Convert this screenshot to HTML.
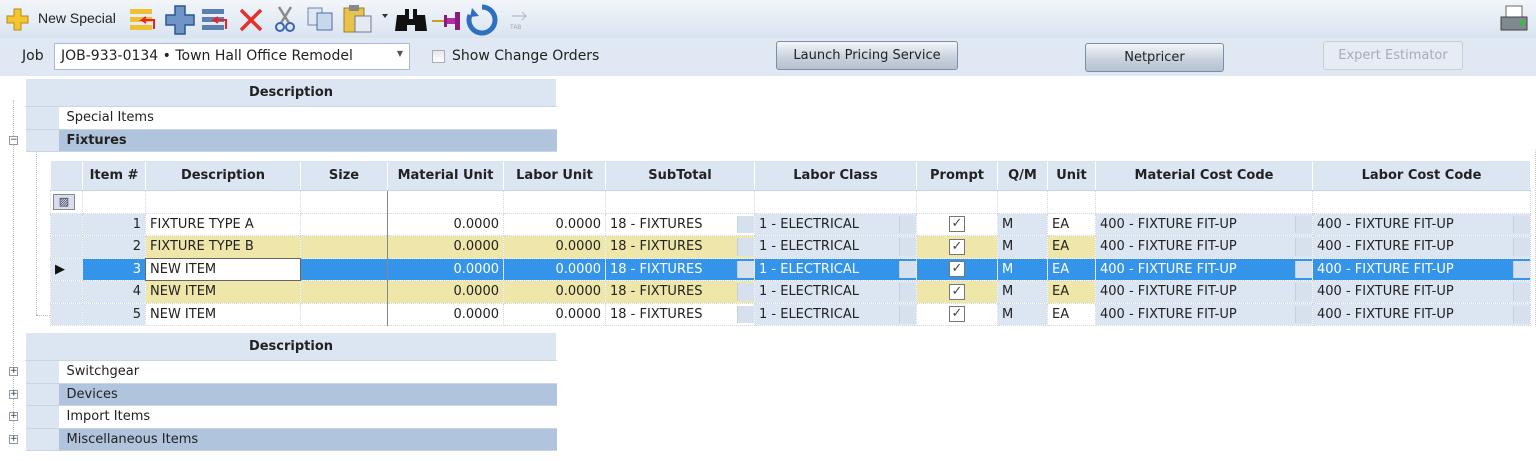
<!DOCTYPE html>
<html><head><meta charset="utf-8"><style>
*{box-sizing:border-box;margin:0;padding:0}
body{width:1536px;height:461px;background:#fff;font-family:"DejaVu Sans","Liberation Sans",sans-serif;font-size:13px;color:#222;position:relative;overflow:hidden}
.a{position:absolute}
.tb{left:0;top:0;width:1536px;height:38px;background:linear-gradient(#f3f6fa,#d9e4f1)}
.jr{left:0;top:38px;width:1536px;height:38px;background:#dfe8f3}
.btn{position:absolute;height:29px;border:1px solid #7a8ea8;border-radius:3px;background:linear-gradient(#f4f6f9,#c9d3df 55%,#b5c1cf);text-align:center;line-height:27px;font-size:13px;color:#222}
table{border-collapse:collapse;table-layout:fixed;position:absolute}
td{height:22.5px;padding:0 4px;white-space:nowrap;overflow:hidden;border:1px dotted #d2d8e0}
.h td{background:#dce6f2;font-weight:bold;text-align:center;height:30px;border:1px solid #fff;border-bottom:1px solid #c9d5e3}
.lb{background:#dce6f2}
.y{background:#efe6a9}
.s td{background:#3494ea;color:#fff}
.r{text-align:right}
.c{text-align:center}
.chk{display:inline-block;width:16px;height:16px;border:1px solid #777;background:#fff;font-size:13px;line-height:14px;color:#444;text-align:center;vertical-align:middle}
.dd{position:relative}
.dd:after{content:"";position:absolute;right:0;top:2px;bottom:2px;width:16px;background:#d7e1ee;border-left:1px solid #c5d0de}
.dt td{height:22.5px;border:none;border-bottom:1px solid #c9d5e3}
.pl{position:absolute;left:9px;width:9px;height:9px;border:1px solid #8a9ab0;background:#fff;font-size:9px;line-height:7px;text-align:center;color:#333}
</style></head><body>
<div class="a tb"></div>
<div class="a jr"></div>
<svg class="a" style="left:6px;top:8px" width="24" height="24"><path d="M8 1h7v7h7v7h-7v7H8v-7H1V8h7z" fill="#f3c630" stroke="#b58a10"/></svg>
<div class="a" style="left:38px;top:10px;font-family:'Liberation Sans',sans-serif;font-size:14px">New Special</div>
<svg class="a" style="left:128px;top:7px" width="30" height="26"><rect x="2" y="2" width="22" height="5" fill="#f0c030"/><rect x="2" y="10" width="22" height="5" fill="#f0c030"/><rect x="2" y="18" width="22" height="5" fill="#f0c030"/><path d="M26 22v-9h-12l4-3m-4 3l4 3" stroke="#e22" stroke-width="2" fill="none"/></svg>
<svg class="a" style="left:164px;top:4px" width="32" height="32"><path d="M11 2h10v9h9v10h-9v9H11v-9H2V11h9z" fill="#6f95c8" stroke="#2d5690" stroke-width="1.5"/></svg>
<svg class="a" style="left:200px;top:7px" width="30" height="26"><rect x="2" y="2" width="22" height="5" fill="#5a7fb0"/><rect x="2" y="10" width="22" height="5" fill="#5a7fb0"/><rect x="2" y="18" width="22" height="5" fill="#5a7fb0"/><path d="M26 22v-9h-12l4-3m-4 3l4 3" stroke="#e22" stroke-width="2" fill="none"/></svg>
<svg class="a" style="left:238px;top:7px" width="26" height="26"><path d="M3 3l20 20M23 3L3 23" stroke="#e8302a" stroke-width="3.5"/></svg>
<svg class="a" style="left:274px;top:5px" width="22" height="28"><path d="M5 2l10 16M17 2L7 18" stroke="#8a8a8a" stroke-width="2.5"/><circle cx="6" cy="22" r="4" fill="none" stroke="#3a66b0" stroke-width="2"/><circle cx="16" cy="22" r="4" fill="none" stroke="#3a66b0" stroke-width="2"/></svg>
<svg class="a" style="left:306px;top:6px" width="30" height="26"><rect x="2" y="2" width="14" height="17" fill="#dfe7f3" stroke="#6b86b0"/><rect x="11" y="7" width="15" height="17" fill="#c9d7eb" stroke="#4c6fa5"/></svg>
<svg class="a" style="left:342px;top:4px" width="36" height="30"><rect x="2" y="4" width="20" height="24" fill="#e8c24a" stroke="#a07d20"/><rect x="7" y="1" width="10" height="6" fill="#888"/><rect x="13" y="12" width="16" height="16" fill="#e6eaf0" stroke="#6b7a90"/></svg>
<div class="a" style="left:382px;top:14px;width:0;height:0;border:3px solid transparent;border-top:4px solid #333"></div>
<svg class="a" style="left:394px;top:5px" width="34" height="28"><path d="M3 10h10v16H1z M21 10h10l2 16H21z M11 4h4v10h-4zM19 4h4v10h-4zM12 14h10v6H12z" fill="#111"/></svg>
<svg class="a" style="left:430px;top:9px" width="34" height="22"><path d="M2 12h16" stroke="#c8a020" stroke-width="2"/><rect x="16" y="9" width="10" height="6" fill="#b030a0"/><rect x="25" y="3" width="5" height="18" fill="#8a1a80"/><rect x="14" y="6" width="3" height="12" fill="#8a1a80"/></svg>
<svg class="a" style="left:466px;top:4px" width="32" height="32"><path d="M16 3a13 13 0 1 1-12 8" stroke="#2d6fc0" stroke-width="5" fill="none"/><path d="M6 4l-2 9 9-1z" fill="#2d6fc0"/></svg>
<svg class="a" style="left:506px;top:6px" width="26" height="26"><path d="M6 10h14m-4-4l4 4-4 4" stroke="#b8bcc4" stroke-width="1.2" fill="none"/><text x="4" y="23" font-size="6" fill="#aaa">TAB</text></svg>
<svg class="a" style="left:1498px;top:4px" width="32" height="30"><rect x="8" y="2" width="16" height="12" fill="#fff" stroke="#666"/><path d="M3 13h26v13H3z" fill="#808890" stroke="#444"/><rect x="22" y="17" width="4" height="4" fill="#2c2"/></svg>

<div class="a" style="left:22px;top:48px;font-size:14px">Job</div>
<div class="a" style="left:54px;top:43px;width:356px;height:27px;background:#fff;border:1px solid #a7bcd8;padding:4px 6px;font-size:14px">JOB-933-0134 • Town Hall Office Remodel<span style="position:absolute;right:6px;top:5px;font-size:8px;color:#555">▼</span></div>
<div class="a" style="left:432px;top:50px;width:13px;height:13px;border:1px solid #aab;background:linear-gradient(#e8e8e8,#fff)"></div>
<div class="a" style="left:452px;top:48px;font-size:14px">Show Change Orders</div>
<div class="btn" style="left:776px;top:41px;width:182px">Launch Pricing Service</div>
<div class="btn" style="left:1085px;top:43px;width:139px">Netpricer</div>
<div class="btn" style="left:1323px;top:41px;width:140px;color:#aab;border-color:#c5ced9;background:#e6ecf4">Expert Estimator</div>

<div class="a" style="left:13px;top:100px;height:344px;border-left:1px dotted #bbb"></div>
<div class="a" style="left:36px;top:150px;height:165px;border-left:1px dotted #bbb"></div>
<div class="a" style="left:36px;top:315px;width:14px;border-top:1px dotted #bbb"></div>
<div class="a" style="left:1535px;top:150px;height:175px;border-left:1px dotted #ccc"></div>

<table style="left:25px;top:78px;width:532px">
<colgroup><col style="width:33px"><col></colgroup>
<tr class="h"><td colspan="2" style="height:28px">Description</td></tr>
<tr class="dt"><td class="lb"></td><td style="padding-left:8px">Special Items</td></tr>
<tr class="dt"><td class="lb"></td><td style="background:#b1c4dd;font-weight:bold;padding-left:8px">Fixtures</td></tr>
</table>
<div class="pl" style="top:136px">−</div>

<table style="left:50px;top:160px;width:1480px">
<colgroup><col style="width:32px"><col style="width:63px"><col style="width:155px"><col style="width:87px"><col style="width:116px"><col style="width:102px"><col style="width:149px"><col style="width:162px"><col style="width:81px"><col style="width:50px"><col style="width:48px"><col style="width:217px"><col style="width:218px"></colgroup>
<tr class="h"><td></td><td>Item #</td><td>Description</td><td>Size</td><td>Material Unit</td><td>Labor Unit</td><td>SubTotal</td><td>Labor Class</td><td>Prompt</td><td>Q/M</td><td>Unit</td><td>Material Cost Code</td><td>Labor Cost Code</td></tr>
<tr><td style="padding:2px"><span style="display:inline-block;width:22px;height:16px;background:#d8def0;border:1px solid #888;font-size:11px;line-height:14px;text-align:center;color:#334">▨</span></td><td></td><td></td><td></td><td style="border-left:1px solid #888"></td><td></td><td></td><td></td><td></td><td></td><td></td><td></td><td></td></tr>
<tr><td class="lb"></td><td class="lb r">1</td><td>FIXTURE TYPE A</td><td></td><td class="r" style="border-left:1px solid #888">0.0000</td><td class="r">0.0000</td><td class="dd">18 - FIXTURES</td><td class="lb dd">1 - ELECTRICAL</td><td class="c"><span class="chk">✓</span></td><td class="lb">M</td><td>EA</td><td class="lb dd">400 - FIXTURE FIT-UP</td><td class="lb dd">400 - FIXTURE FIT-UP</td></tr>
<tr><td class="lb"></td><td class="lb r">2</td><td class="y">FIXTURE TYPE B</td><td class="y"></td><td class="y r" style="border-left:1px solid #888">0.0000</td><td class="y r">0.0000</td><td class="y dd">18 - FIXTURES</td><td class="lb dd">1 - ELECTRICAL</td><td class="y c"><span class="chk">✓</span></td><td class="lb">M</td><td class="y">EA</td><td class="lb dd">400 - FIXTURE FIT-UP</td><td class="lb dd">400 - FIXTURE FIT-UP</td></tr>
<tr class="s"><td style="color:#111;background:#dce6f2">▶</td><td class="r">3</td><td style="background:#fff!important;color:#222;border:1px solid #666">NEW ITEM</td><td></td><td class="r" style="border-left:1px solid #888">0.0000</td><td class="r">0.0000</td><td class="dd">18 - FIXTURES</td><td class="dd">1 - ELECTRICAL</td><td class="c"><span class="chk">✓</span></td><td>M</td><td>EA</td><td class="dd">400 - FIXTURE FIT-UP</td><td class="dd">400 - FIXTURE FIT-UP</td></tr>
<tr><td class="lb"></td><td class="lb r">4</td><td class="y">NEW ITEM</td><td class="y"></td><td class="y r" style="border-left:1px solid #888">0.0000</td><td class="y r">0.0000</td><td class="y dd">18 - FIXTURES</td><td class="lb dd">1 - ELECTRICAL</td><td class="y c"><span class="chk">✓</span></td><td class="lb">M</td><td class="y">EA</td><td class="lb dd">400 - FIXTURE FIT-UP</td><td class="lb dd">400 - FIXTURE FIT-UP</td></tr>
<tr><td class="lb"></td><td class="lb r">5</td><td>NEW ITEM</td><td></td><td class="r" style="border-left:1px solid #888">0.0000</td><td class="r">0.0000</td><td class="dd">18 - FIXTURES</td><td class="lb dd">1 - ELECTRICAL</td><td class="c"><span class="chk">✓</span></td><td class="lb">M</td><td>EA</td><td class="lb dd">400 - FIXTURE FIT-UP</td><td class="lb dd">400 - FIXTURE FIT-UP</td></tr>
</table>

<table style="left:25px;top:332px;width:532px">
<colgroup><col style="width:33px"><col></colgroup>
<tr class="h"><td colspan="2" style="height:28px">Description</td></tr>
<tr class="dt"><td class="lb"></td><td style="padding-left:8px">Switchgear</td></tr>
<tr class="dt"><td class="lb"></td><td style="background:#b1c4dd;padding-left:8px">Devices</td></tr>
<tr class="dt"><td class="lb"></td><td style="padding-left:8px">Import Items</td></tr>
<tr class="dt"><td class="lb"></td><td style="background:#b1c4dd;padding-left:8px">Miscellaneous Items</td></tr>
</table>
<div class="pl" style="top:367px">+</div>
<div class="pl" style="top:390px">+</div>
<div class="pl" style="top:412px">+</div>
<div class="pl" style="top:435px">+</div>
</body></html>
